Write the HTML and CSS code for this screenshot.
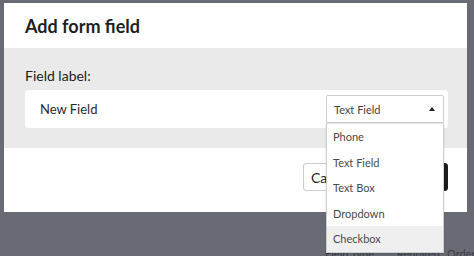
FILE: index.html
```html
<!DOCTYPE html>
<html>
<head>
<meta charset="utf-8">
<link rel="stylesheet" href="styles.css">
</head>
<body>
<div class="page">
  <div class="modal">
    <div class="modal-head">
      <h1 class="title">Add form field</h1>
    </div>
    <div class="modal-body">
      <div class="label">Field label:</div>
      <div class="field-card">
        <span class="field-value">New Field</span>
        <div class="select">
          <div class="select-box">
            <span>Text Field</span>
            <span class="arrow"></span>
          </div>
          <ul class="options">
            <li>Phone</li>
            <li>Text Field</li>
            <li>Text Box</li>
            <li>Dropdown</li>
            <li class="hover">Checkbox</li>
          </ul>
        </div>
      </div>
    </div>
    <div class="modal-foot">
      <button class="btn btn-cancel">Cancel</button>
      <button class="btn btn-add">Add</button>
    </div>
  </div>
  <div class="table-head">
    <span class="col col-type">Field Type</span>
    <span class="col col-req">Required</span>
    <span class="col col-order">Order</span>
  </div>
</div>
</body>
</html>
```
FILE: styles.css
```css
* { box-sizing: border-box; }
html, body { margin: 0; padding: 0; }
body {
  width: 474px;
  height: 256px;
  overflow: hidden;
  background: #686b74;
  font-family: Lato, "Open Sans", "Liberation Sans", sans-serif;
  color: #222;
}
.page {
  padding: 3px 7px 0 4px;
}
.modal {
  width: 463px;
  height: 209px;
  display: flex;
  flex-direction: column;
  background: #fff;
}
.modal-head {
  height: 45px;
  padding: 0 21px;
  display: flex;
  align-items: center;
}
.title {
  margin: 0;
  font-size: 18px;
  font-weight: 700;
  color: #1f1f1f;
}
.modal-body {
  height: 100px;
  background: #e9eae9;
  padding: 18px 19px 0 21px;
}
.label {
  font-size: 14px;
  color: #222;
  height: 24px;
  line-height: 20px;
}
.field-card {
  height: 38px;
  background: #fff;
  border-radius: 3px;
  display: flex;
  align-items: center;
  justify-content: space-between;
  padding: 0 4px 0 15px;
}
.field-value {
  font-size: 13px;
  color: #2a2a2a;
}
.select {
  position: relative;
  width: 118px;
}
.select-box {
  height: 28px;
  border: 1px solid #cfcfcf;
  border-radius: 2px 2px 0 0;
  background: #fff;
  display: flex;
  align-items: center;
  justify-content: space-between;
  padding: 0 8px 0 7px;
  font-size: 11px;
  color: #444;
}
.arrow {
  width: 0;
  height: 0;
  border-left: 3.5px solid transparent;
  border-right: 3.5px solid transparent;
  border-bottom: 4px solid #222;
}
.options {
  position: absolute;
  left: 0;
  top: 28px;
  width: 118px;
  margin: 0;
  padding: 0;
  list-style: none;
  background: #fff;
  border: 1px solid #cfcfcf;
  border-top: 1px solid #e3e3e3;
  z-index: 5;
  box-shadow: 0 1px 2px rgba(0,0,0,0.15);
}
.options li {
  height: 25.5px;
  line-height: 25.5px;
  padding-left: 6px;
  font-size: 11px;
  color: #4a4a4a;
}
.options li.hover {
  background: #efefef;
}
.modal-foot {
  flex: 1;
  display: flex;
  align-items: center;
  justify-content: flex-end;
  gap: 8px;
  padding: 0 19px 6px 0;
}
.btn {
  height: 28px;
  font-family: inherit;
  font-size: 14px;
  border-radius: 3px;
}
.btn-cancel {
  background: #fff;
  border: 1px solid #ccc;
  color: #222;
  width: 72px;
  padding: 0 0 0 7px;
  text-align: left;
}
.btn-add {
  background: #1c1c1c;
  border: 1px solid #1c1c1c;
  color: #fff;
  width: 65px;
}
.table-head {
  position: relative;
  height: 20px;
  margin-top: 35px;
  font-size: 11px;
  color: #3b3d44;
}
.col { position: absolute; top: 0; }
.col-type { left: 321px; }
.col-req { left: 393px; }
.col-order { left: 443px; }
```
